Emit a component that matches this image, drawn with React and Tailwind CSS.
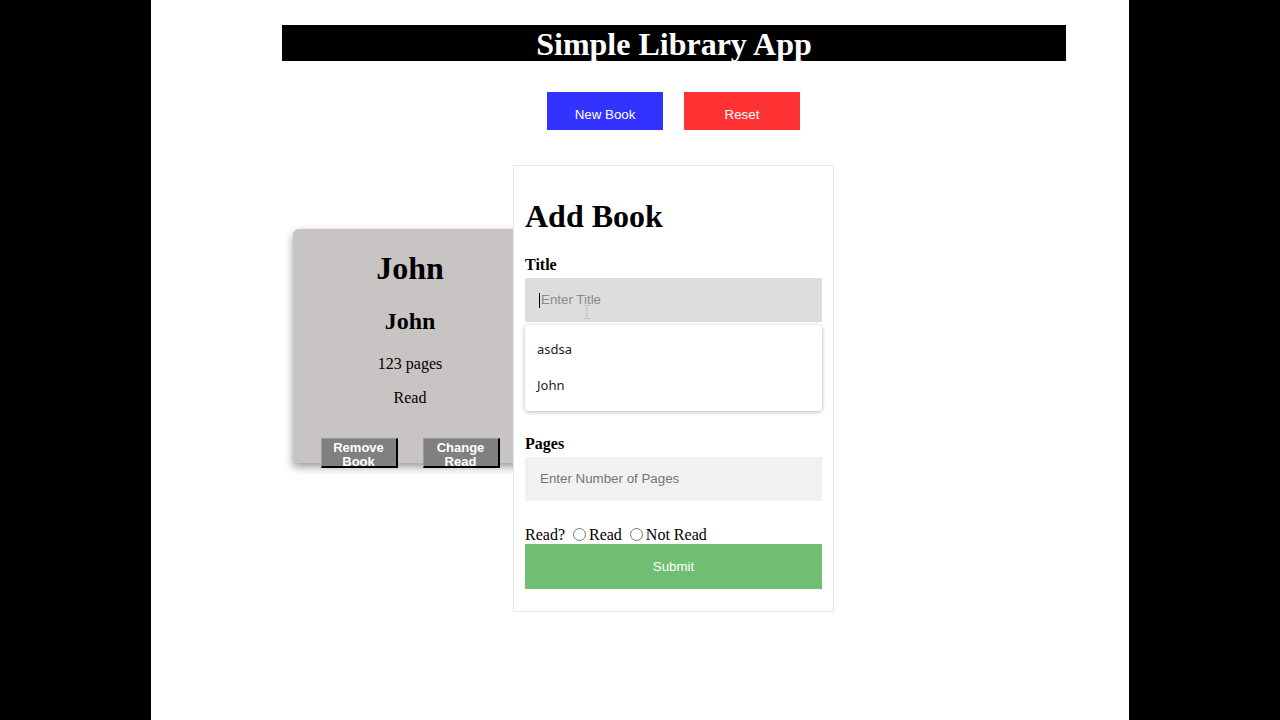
import React from "react";

const serif = { fontFamily: '"Liberation Serif", "Times New Roman", serif' };
const sans = { fontFamily: '"Liberation Sans", Arial, sans-serif' };
const ui = { fontFamily: '"Noto Sans", "Open Sans", sans-serif' };

function Radio() {
  return (
    <span className="inline-block w-[13px] h-[13px] rounded-full border border-[#767676] bg-white ml-[4px] mr-[3px] align-[-1px]" />
  );
}

function CardButton({ children }) {
  return (
    <button
      className="w-[77px] h-[30px] bg-[#808080] text-white text-[13px] leading-[14px] font-bold border-t border-l border-[#9a9a9a] border-b-2 border-r-2 border-b-black border-r-black pt-[2px]"
      style={sans}
    >
      {children}
    </button>
  );
}

function BookCard() {
  return (
    <div
      className="w-[234px] h-[234px] bg-[#c9c4c4] rounded-tl-[6px] shadow-[0_4px_8px_rgba(0,0,0,0.4)] flex flex-col items-center pt-[21px] text-black"
      style={serif}
    >
      <h1 className="text-[32px] leading-[37px] font-bold">John</h1>
      <h2 className="text-[24px] leading-[28px] font-bold mt-[20px]">John</h2>
      <p className="text-[16px] leading-[18px] mt-[20px]">123 pages</p>
      <p className="text-[16px] leading-[18px] mt-[16px]">Read</p>
      <div className="flex gap-[25px] mt-[31px]">
        <CardButton>Remove Book</CardButton>
        <CardButton>Change Read</CardButton>
      </div>
    </div>
  );
}

function AddBookForm() {
  return (
    <div
      className="absolute left-[362px] top-[165px] w-[321px] h-[447px] bg-white border border-[#e6e6e6] px-[11px] pt-[32px] text-black"
      style={serif}
    >
      <h1 className="text-[32px] leading-[37px] font-bold">Add Book</h1>

      <label className="block text-[16px] leading-[18px] font-bold mt-[21px]">Title</label>
      <div className="relative mt-[4px]">
        <div className="h-[44px] bg-[#dddddd] flex items-center pl-[14px] text-[13.33px] text-[#8a8a8a]" style={sans}>
          <span className="inline-block w-px h-[15px] bg-black mr-[1px]" />
          Enter Title
        </div>
        {/* mouse I-beam over the focused field */}
        <svg className="absolute left-[58px] top-[27px]" width="8" height="14" viewBox="0 0 8 14">
          <path d="M1 0.5h2.5M4.5 0.5H7M4 1v12M1 13.5h2.5M4.5 13.5H7" stroke="#bbbbbb" strokeWidth="1" fill="none" />
        </svg>

        {/* autocomplete suggestions */}
        <div className="absolute left-0 top-[47px] w-full h-[86px] bg-white rounded-[4px] shadow-[0_1px_4px_rgba(0,0,0,0.3)] pt-[7px] z-10 text-[13px] text-[#222]" style={ui}>
          <div className="h-[36px] flex items-center px-[12px]">asdsa</div>
          <div className="h-[36px] flex items-center px-[12px]">John</div>
        </div>
      </div>

      {/* room taken by the field hidden under the suggestion list */}
      <div className="h-[89px]" />

      <label className="block text-[16px] leading-[18px] font-bold mt-[24px]">Pages</label>
      <div className="h-[44px] bg-[#f1f1f1] mt-[4px] flex items-center pl-[15px] text-[13.33px] text-[#757575]" style={sans}>
        Enter Number of Pages
      </div>

      <div className="text-[16px] leading-[18px] mt-[25px] whitespace-nowrap">
        Read? <Radio />Read <Radio />Not Read
      </div>

      <button
        className="block w-full h-[45px] bg-[#6fbe72] text-white text-[13.33px]"
        style={sans}
      >
        Submit
      </button>
    </div>
  );
}

export default function App() {
  return (
    <div className="w-[1280px] h-[720px] bg-black flex overflow-hidden">
      <div className="relative ml-[151px] w-[978px] h-[720px] bg-white">
        <header className="ml-[131px] mt-[25px] w-[784px] h-[36px] bg-black flex items-center justify-center">
          <h1 className="text-white text-[32px] leading-none font-bold pt-[2px]" style={serif}>
            Simple Library App
          </h1>
        </header>

        <div className="flex gap-[21px] ml-[396px] mt-[31px]">
          <button className="w-[116px] h-[38px] bg-[#3333ff] text-white text-[13.33px] pt-[7px]" style={sans}>
            New Book
          </button>
          <button className="w-[116px] h-[38px] bg-[#ff3333] text-white text-[13.33px] pt-[7px]" style={sans}>
            Reset
          </button>
        </div>

        <div className="ml-[142px] mt-[99px] flex">
          <BookCard />
        </div>

        <AddBookForm />
      </div>
    </div>
  );
}
